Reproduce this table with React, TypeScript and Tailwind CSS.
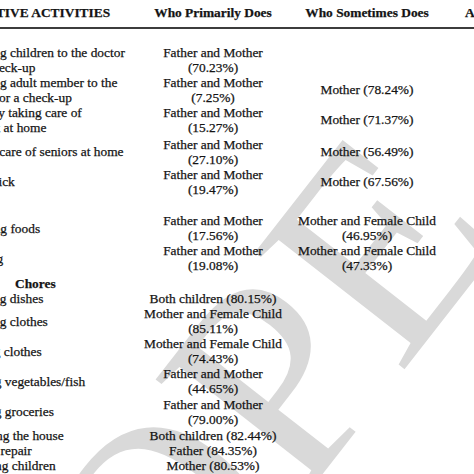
import React from "react";

type Line = { t: string; ml?: string };
type Row = { mt: string; c1: Line[]; c2: string[]; c3: string[]; bold?: boolean };

const rows: Row[] = [
  {
    mt: "mt-[15.5px]",
    c1: [
      { t: "Bringing children to the doctor", ml: "ml-[-41px]" },
      { t: "for a check-up", ml: "ml-[-42px]" },
    ],
    c2: ["Father and Mother", "(70.23%)"],
    c3: [],
  },
  {
    mt: "mt-0",
    c1: [
      { t: "Bringing adult member to the", ml: "ml-[-41px]" },
      { t: "doctor for a check-up", ml: "ml-[-43px]" },
    ],
    c2: ["Father and Mother", "(7.25%)"],
    c3: ["Mother (78.24%)"],
  },
  {
    mt: "mt-0",
    c1: [
      { t: "Anybody taking care of", ml: "ml-[-45px]" },
      { t: "the sick at home", ml: "ml-[-41px]" },
    ],
    c2: ["Father and Mother", "(15.27%)"],
    c3: ["Mother (71.37%)"],
  },
  {
    mt: "mt-[2px]",
    c1: [{ t: "Taking care of seniors at home", ml: "ml-[-41px]" }],
    c2: ["Father and Mother", "(27.10%)"],
    c3: ["Mother (56.49%)"],
  },
  {
    mt: "mt-0",
    c1: [{ t: "Nursing the sick", ml: "ml-[-73px]" }],
    c2: ["Father and Mother", "(19.47%)"],
    c3: ["Mother (67.56%)"],
  },
  {
    mt: "mt-[16.5px]",
    c1: [{ t: "Preparing foods", ml: "ml-[-45px]" }],
    c2: ["Father and Mother", "(17.56%)"],
    c3: ["Mother and Female Child", "(46.95%)"],
  },
  {
    mt: "mt-0",
    c1: [{ t: "Cooking", ml: "ml-[-43px]" }],
    c2: ["Father and Mother", "(19.08%)"],
    c3: ["Mother and Female Child", "(47.33%)"],
  },
  {
    mt: "mt-[3px]",
    c1: [{ t: "Chores", ml: "ml-[15px]" }],
    c2: [],
    c3: [],
    bold: true,
  },
  {
    mt: "mt-0",
    c1: [{ t: "Washing dishes", ml: "ml-[-40px]" }],
    c2: ["Both children (80.15%)"],
    c3: [],
  },
  {
    mt: "mt-0",
    c1: [{ t: "Washing clothes", ml: "ml-[-40px]" }],
    c2: ["Mother and Female Child", "(85.11%)"],
    c3: [],
  },
  {
    mt: "mt-0",
    c1: [{ t: "Ironing clothes", ml: "ml-[-39px]" }],
    c2: ["Mother and Female Child", "(74.43%)"],
    c3: [],
  },
  {
    mt: "mt-0",
    c1: [{ t: "Buying vegetables/fish", ml: "ml-[-38px]" }],
    c2: ["Father and Mother", "(44.65%)"],
    c3: [],
  },
  {
    mt: "mt-[0.5px]",
    c1: [{ t: "Buying groceries", ml: "ml-[-38px]" }],
    c2: ["Father and Mother", "(79.00%)"],
    c3: [],
  },
  {
    mt: "mt-[1.5px]",
    c1: [{ t: "Cleaning the house", ml: "ml-[-39px]" }],
    c2: ["Both children (82.44%)"],
    c3: [],
  },
  {
    mt: "mt-0",
    c1: [{ t: "House repair", ml: "ml-[-37px]" }],
    c2: ["Father (84.35%)"],
    c3: [],
  },
  {
    mt: "mt-0",
    c1: [{ t: "Tutoring children", ml: "ml-[-38px]" }],
    c2: ["Mother (80.53%)"],
    c3: [],
  },
];

function Watermark() {
  return (
    <svg
      className="absolute inset-0 pointer-events-none"
      width="474"
      height="474"
      viewBox="0 0 474 474"
    >
      <text
        transform="translate(300 503) rotate(-52)"
        x={-564}
        y={0}
        fontFamily="'Liberation Serif', serif"
        fontSize={290}
        fill="#d9d9d9"
      >
        SCOPE
      </text>
    </svg>
  );
}

export default function App() {
  return (
    <div className="relative w-[474px] h-[474px] overflow-hidden bg-white font-['Liberation_Serif',serif] text-[13.4px] leading-[15px] text-[#141414] [-webkit-text-stroke:0.25px_#141414]">
      <Watermark />
      <div className="relative flex flex-col">
        <div className="flex pt-[5px] font-bold">
          <div className="w-[140px] shrink-0 whitespace-nowrap">
            <div className="ml-[-80px]">REPRODUCTIVE ACTIVITIES</div>
          </div>
          <div className="w-[146px] shrink-0 text-center whitespace-nowrap">Who Primarily Does</div>
          <div className="w-[162px] shrink-0 text-center whitespace-nowrap">Who Sometimes Does</div>
          <div className="pl-[17px] whitespace-nowrap">A</div>
        </div>
        <div className="mt-[7px] h-[2px] bg-[#3c3c3c]" />
        {rows.map((r, i) => (
          <div key={i} className={`flex items-center ${r.mt}`}>
            <div className={`w-[140px] shrink-0 flex flex-col ${r.bold ? "font-bold" : ""}`}>
              {r.c1.map((l, j) => (
                <div key={j} className={`whitespace-nowrap ${l.ml ?? ""}`}>
                  {l.t}
                </div>
              ))}
            </div>
            <div className="w-[146px] shrink-0 flex flex-col items-center text-center">
              {r.c2.map((t, j) => (
                <div key={j} className="whitespace-nowrap">
                  {t}
                </div>
              ))}
            </div>
            <div className="w-[162px] shrink-0 flex flex-col items-center text-center">
              {r.c3.map((t, j) => (
                <div key={j} className="whitespace-nowrap">
                  {t}
                </div>
              ))}
            </div>
          </div>
        ))}
      </div>
    </div>
  );
}
